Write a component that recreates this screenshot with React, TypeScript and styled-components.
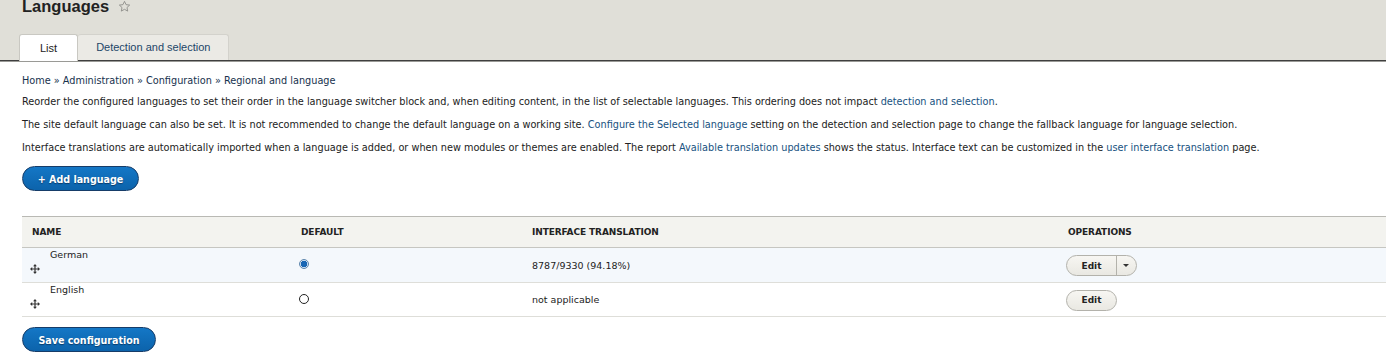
import React from "react";
import styled, { createGlobalStyle } from "styled-components";

const GlobalStyle = createGlobalStyle`
  html, body { margin: 0; padding: 0; background: #ffffff; }
  body { font-family: "Liberation Sans", Arial, sans-serif; color: #222; }
  * { box-sizing: border-box; }
`;

const NARROW = `"DejaVu Sans Condensed", "DejaVu Sans", sans-serif`;
const TABLEFONT = `"DejaVu Sans", Verdana, sans-serif`;

const Header = styled.header`
  background: #e0dfd8;
  border-bottom: 1px solid #3f3f3f;
  box-shadow: 0 1px 0 #9a9a96;
  padding: 0 0 0 19px;
  height: 61px;
  display: flex;
  flex-direction: column;
`;

const TitleRow = styled.div`
  display: flex;
  align-items: center;
  gap: 9px;
  margin-top: -4px;
  padding-left: 3px;
  height: 20px;
`;

const Title = styled.h1`
  margin: 0;
  font-family: "Liberation Sans", Arial, sans-serif;
  font-size: 16.5px;
  line-height: 20px;
  font-weight: 700;
  color: #222;
`;

const Tabs = styled.nav`
  display: flex;
  align-items: flex-end;
  margin-top: 18px;
  height: 27px;
`;

const Tab = styled.a<{ $active?: boolean }>`
  display: flex;
  align-items: center;
  justify-content: center;
  height: ${(p) => (p.$active ? "27px" : "26px")};
  padding: 0 ${(p) => (p.$active ? "20px" : "18px")} 1px;
  background: ${(p) => (p.$active ? "#ffffff" : "#ebeae5")};
  border: 1px solid ${(p) => (p.$active ? "#c9c8c2" : "#d3d2cc")};
  border-bottom: none;
  border-left: ${(p) => (p.$active ? "1px solid #c9c8c2" : "none")};
  border-radius: 3px 3px 0 0;
  font-family: "Liberation Sans", Arial, sans-serif;
  font-size: 11px;
  color: ${(p) => (p.$active ? "#222" : "#1d4668")};
  text-decoration: none;
  position: relative;
  z-index: ${(p) => (p.$active ? 2 : 1)};
  margin-bottom: ${(p) => (p.$active ? "-1px" : "0")};
`;

const Content = styled.main`
  padding: 12px 0 0 22px;
  display: flex;
  flex-direction: column;
`;

const Breadcrumb = styled.div`
  font-family: ${NARROW};
  font-size: 10.8px;
  line-height: 16px;
  color: #17324e;
`;

const Paragraph = styled.p<{ $gap: number }>`
  margin: ${(p) => p.$gap}px 0 0;
  font-family: ${NARROW};
  font-size: 10.8px;
  line-height: 16px;
  color: #222;
  white-space: nowrap;
`;

const Link = styled.a`
  color: #18527f;
  text-decoration: none;
`;

const PrimaryButton = styled.button<{ $width: number; $mt: number }>`
  margin-top: ${(p) => p.$mt}px;
  width: ${(p) => p.$width}px;
  height: 25px;
  border-radius: 13px;
  border: 1px solid #163c68;
  background: linear-gradient(#1477c6, #0c63ab);
  color: #fff;
  font-family: ${NARROW};
  font-weight: 700;
  font-size: 10.6px;
  text-shadow: 0 1px 1px #0a3c6b;
  padding: 0;
  cursor: pointer;
`;

const Table = styled.div`
  margin-top: 25px;
  border-top: 1px solid #b9b9b4;
  font-family: ${TABLEFONT};
`;

const Row = styled.div<{ $head?: boolean; $tint?: boolean; $h: number }>`
  display: grid;
  grid-template-columns: 269px 231px 536px 1fr;
  height: ${(p) => p.$h}px;
  background: ${(p) => (p.$head ? "#f3f3ef" : p.$tint ? "#f4f8fc" : "#ffffff")};
  border-bottom: 1px solid ${(p) => (p.$head ? "#c6c6c1" : "#deded9")};
  align-items: center;
`;

const HeadCell = styled.div`
  padding-left: 10px;
  font-size: 9px;
  font-weight: 700;
  color: #222;
  letter-spacing: -0.1px;
`;

const Cell = styled.div<{ $pl?: number }>`
  padding-left: ${(p) => p.$pl ?? 10}px;
  font-size: 9.5px;
  color: #222;
  display: flex;
  align-items: center;
`;

const NameCell = styled.div`
  align-self: stretch;
  display: flex;
  align-items: flex-start;
  padding: 1px 0 0 8px;
`;

const Handle = styled.span`
  width: 10px;
  height: 10px;
  margin-top: 15px;
  margin-right: 10px;
  display: flex;
`;

const NameText = styled.span`
  font-size: 9.5px;
  line-height: 12px;
  color: #222;
`;

const Radio = styled.span<{ $checked?: boolean }>`
  width: 10px;
  height: 10px;
  border-radius: 50%;
  border: 1px solid ${(p) => (p.$checked ? "#5d86ad" : "#222")};
  background: ${(p) => (p.$checked ? "radial-gradient(circle, #1866b4 0 3px, #cfe0f2 3.4px)" : "#fff")};
  display: inline-block;
  margin-top: ${(p) => (p.$checked ? "-3px" : "-2px")};
`;

const SplitButton = styled.div<{ $w: number }>`
  width: ${(p) => p.$w}px;
  height: 21px;
  display: flex;
  border: 1px solid #b3b2ab;
  border-radius: 11px;
  background: linear-gradient(#f7f6f2, #e9e8e2);
  overflow: hidden;
  margin-top: 1px;
`;

const EditPart = styled.span`
  width: 49px;
  display: flex;
  align-items: center;
  justify-content: center;
  font-size: 9px;
  font-weight: 700;
  color: #222;
`;

const ToggleTail = styled.span`
  flex: 1;
  border-left: 1px solid #b3b2ab;
  display: flex;
  align-items: center;
  justify-content: center;
`;

const Caret = styled.span`
  width: 0;
  height: 0;
  border-left: 3px solid transparent;
  border-right: 3px solid transparent;
  border-top: 3px solid #333;
  margin-left: -2px;
`;

const DragIcon = () => (
  <svg width="10" height="10" viewBox="0 0 10 10">
    <path d="M5 1.5 V8.5 M1.5 5 H8.5" stroke="#333" strokeWidth="1.2" />
    <path d="M5 0 L3.1 2.2 H6.9 Z M5 10 L3.1 7.8 H6.9 Z M0 5 L2.2 3.1 V6.9 Z M10 5 L7.8 3.1 V6.9 Z" fill="#333" />
  </svg>
);

const Star = () => (
  <svg width="13" height="13" viewBox="0 0 24 24">
    <path
      d="M12 2.5 L14.9 8.6 L21.5 9.4 L16.6 13.9 L17.9 20.5 L12 17.2 L6.1 20.5 L7.4 13.9 L2.5 9.4 L9.1 8.6 Z"
      fill="none"
      stroke="#8a8a86"
      strokeWidth="1.6"
      strokeLinejoin="round"
    />
  </svg>
);

type Lang = { name: string; checked: boolean; status: string; split: boolean };
const langs: Lang[] = [
  { name: "German", checked: true, status: "8787/9330 (94.18%)", split: true },
  { name: "English", checked: false, status: "not applicable", split: false },
];

export default function App() {
  return (
    <>
      <GlobalStyle />
      <Header>
        <TitleRow>
          <Title>Languages</Title>
          <Star />
        </TitleRow>
        <Tabs>
          <Tab $active>List</Tab>
          <Tab>Detection and selection</Tab>
        </Tabs>
      </Header>
      <Content>
        <Breadcrumb>
          Home » Administration » Configuration » Regional and language
        </Breadcrumb>
        <Paragraph $gap={5}>
          Reorder the configured languages to set their order in the language switcher block and, when editing
          content, in the list of selectable languages. This ordering does not impact{" "}
          <Link>detection and selection</Link>.
        </Paragraph>
        <Paragraph $gap={7}>
          The site default language can also be set. It is not recommended to change the default language on a
          working site. <Link>Configure the Selected language</Link> setting on the detection and selection page to
          change the fallback language for language selection.
        </Paragraph>
        <Paragraph $gap={7}>
          Interface translations are automatically imported when a language is added, or when new modules or themes
          are enabled. The report <Link>Available translation updates</Link> shows the status. Interface text can be
          customized in the <Link>user interface translation</Link> page.
        </Paragraph>
        <PrimaryButton $width={117} $mt={10}>+ Add language</PrimaryButton>
        <Table>
          <Row $head $h={31}>
            <HeadCell>NAME</HeadCell>
            <HeadCell>DEFAULT</HeadCell>
            <HeadCell>INTERFACE TRANSLATION</HeadCell>
            <HeadCell>OPERATIONS</HeadCell>
          </Row>
          {langs.map((l, i) => (
            <Row key={l.name} $tint={i === 0} $h={i === 0 ? 35 : 34}>
              <NameCell>
                <Handle>
                  <DragIcon />
                </Handle>
                <NameText>{l.name}</NameText>
              </NameCell>
              <Cell $pl={8}>
                <Radio $checked={l.checked} />
              </Cell>
              <Cell>{l.status}</Cell>
              <Cell $pl={8}>
                <SplitButton $w={l.split ? 71 : 51}>
                  <EditPart>Edit</EditPart>
                  {l.split && (
                    <ToggleTail>
                      <Caret />
                    </ToggleTail>
                  )}
                </SplitButton>
              </Cell>
            </Row>
          ))}
        </Table>
        <PrimaryButton $width={134} $mt={10}>Save configuration</PrimaryButton>
      </Content>
    </>
  );
}
